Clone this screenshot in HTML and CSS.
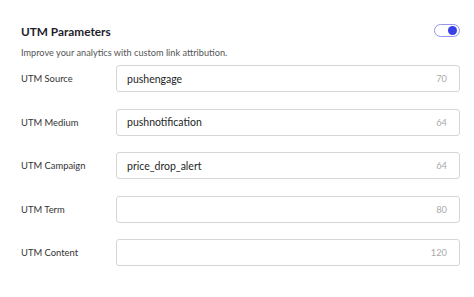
FILE: index.html
```html
<!DOCTYPE html>
<html>
<head>
<meta charset="utf-8">
<link rel="stylesheet" href="styles.css">
</head>
<body>
<div class="panel">
  <div class="header">
    <div class="title">UTM Parameters</div>
    <div class="toggle"><span class="knob"></span></div>
  </div>
  <div class="subtitle">Improve your analytics with custom link attribution.</div>
  <div class="rows">
    <div class="row">
      <div class="label">UTM Source</div>
      <div class="field"><span class="value">pushengage</span><span class="count">70</span></div>
    </div>
    <div class="row">
      <div class="label">UTM Medium</div>
      <div class="field"><span class="value">pushnotification</span><span class="count">64</span></div>
    </div>
    <div class="row">
      <div class="label">UTM Campaign</div>
      <div class="field"><span class="value">price_drop_alert</span><span class="count">64</span></div>
    </div>
    <div class="row">
      <div class="label">UTM Term</div>
      <div class="field"><span class="value"></span><span class="count">80</span></div>
    </div>
    <div class="row">
      <div class="label">UTM Content</div>
      <div class="field"><span class="value"></span><span class="count">120</span></div>
    </div>
  </div>
</div>
</body>
</html>
```
FILE: styles.css
```css
html, body {
  margin: 0;
  padding: 0;
  background: #ffffff;
}
body {
  font-family: Lato, "Noto Sans", sans-serif;
  color: #222;
}
.panel {
  padding: 24px 14px 0 21px;
  width: 439px;
}
.header {
  display: flex;
  justify-content: space-between;
  align-items: flex-start;
  height: 14px;
}
.title {
  font-size: 11.8px;
  font-weight: 700;
  color: #1d1d2b;
  line-height: 14px;
  margin-top: 1px;
}
.toggle {
  width: 24px;
  height: 11px;
  border: 1px solid #9595f0;
  border-radius: 7px;
  position: relative;
}
.knob {
  position: absolute;
  right: 2.5px;
  top: 1px;
  width: 9px;
  height: 9px;
  border-radius: 50%;
  background: #3840e8;
}
.subtitle {
  margin-top: 7.5px;
  font-size: 9.2px;
  color: #555;
  line-height: 14px;
}
.rows {
  margin-top: 5.5px;
  display: flex;
  flex-direction: column;
  gap: 16.5px;
}
.row {
  display: flex;
  align-items: center;
}
.label {
  width: 95px;
  font-size: 9.4px;
  color: #333;
}
.field {
  flex: 1;
  height: 25px;
  border: 1px solid #d6d6d6;
  border-radius: 3px;
  display: flex;
  align-items: center;
  justify-content: space-between;
  padding: 0 12px 0 10px;
}
.value {
  font-size: 10.5px;
  color: #1e1e1e;
}
.count {
  font-size: 9.3px;
  color: #aaa;
}
```
